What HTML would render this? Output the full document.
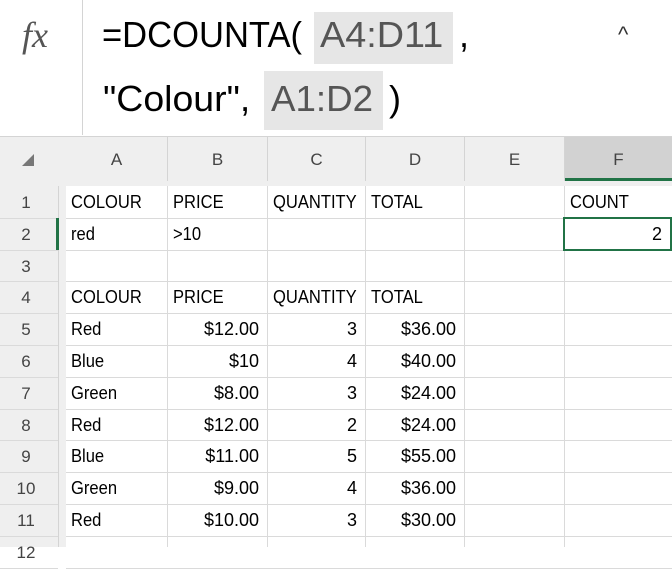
<html><head><style>
body{margin:0;width:672px;height:547px;background:#fff;overflow:hidden;position:relative;font-family:"Liberation Sans",sans-serif}
.a{position:absolute}
.fb{position:absolute;font-size:36px;color:#000;white-space:nowrap;transform-origin:0 0}
.hl{background:#e6e6e6}
.t{position:absolute;font-size:18px;color:#000;white-space:nowrap}
.r{text-align:right}
.hd{position:absolute;top:137px;height:44px;line-height:46px;text-align:center;font-size:17px;color:#444;background:#efefef;border-right:1px solid #d4d4d4}
.rn{position:absolute;left:0;width:52px;text-align:center;font-size:17px;color:#444}
</style></head><body>
<div class="a" style="left:22px;top:14px;font-family:'Liberation Serif',serif;font-style:italic;font-size:36px;color:#555">fx</div>
<div class="a" style="left:82px;top:0;width:1px;height:135px;background:#d4d4d4"></div>
<div class="a hl" style="left:314px;top:12px;width:139px;height:52px"></div>
<div class="a hl" style="left:264px;top:71px;width:119px;height:59px"></div>
<div class="fb" style="left:102px;top:14px;transform:scaleX(0.96)">=DCOUNTA(</div>
<div class="fb" style="left:320px;top:14px;color:#555;transform:scaleX(1.05)">A4:D11</div>
<div class="fb" style="left:459px;top:14px">,</div>
<div class="fb" style="left:103px;top:78px;transform:scaleX(1.04)">"Colour",</div>
<div class="fb" style="left:271px;top:78px;color:#555;transform:scaleX(1.02)">A1:D2</div>
<div class="fb" style="left:389px;top:78px">)</div>
<div class="a" style="left:618px;top:22px;font-size:22px;color:#333">&#94;</div>
<div class="a" style="left:0;top:136px;width:672px;height:1px;background:#d4d4d4"></div>
<div class="hd" style="left:0;width:58px;background:#efefef"></div>
<svg class="a" style="left:20px;top:152px" width="16" height="16"><path d="M14 2L14 14L2 14Z" fill="#777"/></svg>
<div class="hd" style="left:66px;width:101px">A</div>
<div class="hd" style="left:168px;width:99px">B</div>
<div class="hd" style="left:268px;width:97px">C</div>
<div class="hd" style="left:366px;width:98px">D</div>
<div class="hd" style="left:465px;width:99px">E</div>
<div class="hd" style="left:565px;width:107px;background:#d2d2d2;border-bottom:3px solid #217346;height:41px">F</div>
<div class="a" style="left:58px;top:137px;width:8px;height:410px;background:#efefef"></div>
<div class="a" style="left:0;top:183px;width:58px;height:364px;background:#efefef;border-right:1px solid #d4d4d4"></div>
<div class="a" style="left:0;top:181px;width:672px;height:5px;background:#efefef"></div>
<div class="a" style="left:66px;top:186px;width:606px;height:361px;background:#fff"></div>
<div id="g"></div>
<script>
var cols=[66,168,268,366,465,565],h=31.8,t0=186;
var s='';
for(var c=1;c<cols.length;c++)s+='<div class="a" style="left:'+(cols[c]-1)+'px;top:186px;width:1px;height:361px;background:#dadada"></div>';
for(var i=0;i<12;i++){var y=t0+h*(i+1);s+='<div class="a" style="left:66px;top:'+y.toFixed(1)+'px;width:606px;height:1px;background:#dadada"></div>';
s+='<div class="a" style="left:0;top:'+y.toFixed(1)+'px;width:58px;height:1px;background:#dadada"></div>';
s+='<div class="rn" style="top:'+(t0+h*i+7).toFixed(1)+'px">'+(i+1)+'</div>';}
var d=[["COLOUR","PRICE","QUANTITY","TOTAL","","COUNT"],["red",">10","","","",""],["","","","","",""],["COLOUR","PRICE","QUANTITY","TOTAL","",""],
["Red","$12.00","3","$36.00"],["Blue","$10","4","$40.00"],["Green","$8.00","3","$24.00"],["Red","$12.00","2","$24.00"],["Blue","$11.00","5","$55.00"],["Green","$9.00","4","$36.00"],["Red","$10.00","3","$30.00"]];
for(var i=0;i<d.length;i++)for(var c=0;c<d[i].length;c++){var v=d[i][c];if(!v)continue;var y=t0+h*i+6;
var right=i>=4&&c>0;var w=(cols[c+1]||672)-cols[c]-14;
s+='<div class="t'+(right?' r':'')+'" style="left:'+(cols[c]+5)+'px;top:'+y.toFixed(1)+'px;width:'+w+'px;transform-origin:0 0;'+(right?'':'transform:scaleX(0.92)')+'">'+v.replace('>','&gt;')+'</div>';}
document.getElementById('g').innerHTML=s;
</script>
<div class="a" style="left:563px;top:217px;width:105px;height:30px;border:2px solid #217346"></div>
<div class="t r" style="left:565px;top:224px;width:97px">2</div>
<div class="a" style="left:56px;top:218px;width:3px;height:32px;background:#217346"></div>
</body></html>
